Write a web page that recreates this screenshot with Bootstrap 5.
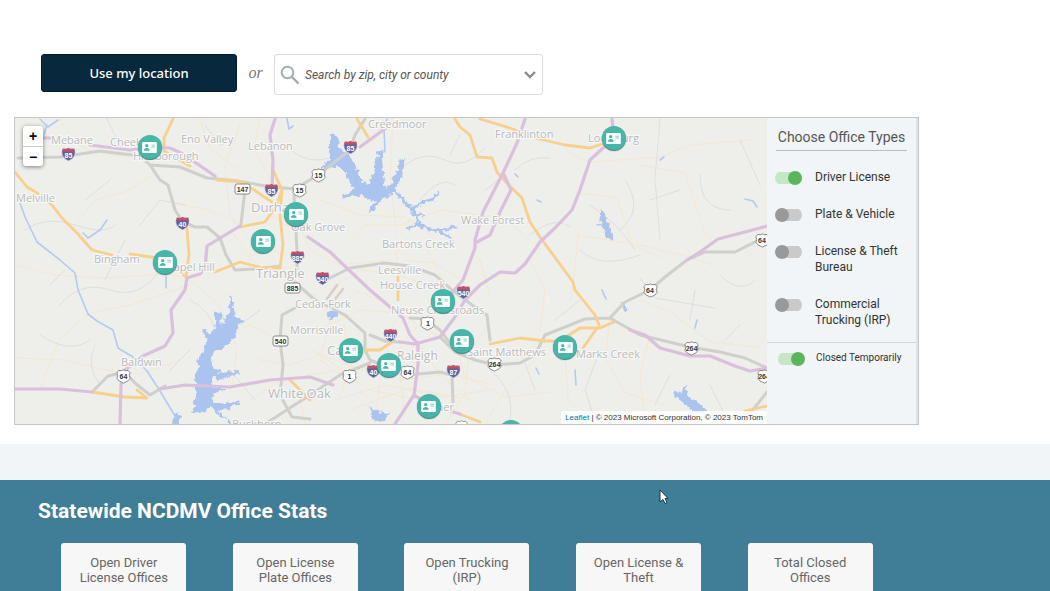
<!DOCTYPE html>
<html lang="en">
<head>
<meta charset="utf-8">
<meta name="viewport" content="width=device-width, initial-scale=1">
<title>NCDMV Office Locations</title>
<link href="https://cdn.jsdelivr.net/npm/bootstrap@5.3.0/dist/css/bootstrap.min.css" rel="stylesheet">
<style>
body{font-family:Roboto,"Liberation Sans",sans-serif;color:#444;background:#fff}
.finder{padding:54px 131px 19px 14px}
.finder-bar{padding-left:27px;margin-bottom:22px;gap:9px}
.btn-locate{width:196px;height:38px;background:#08283d;color:#fff;font:500 13px/18px "Noto Sans",sans-serif;border:1px solid #031a2b;border-radius:3px;padding:0}
.btn-locate:hover{background:#0f3b57;color:#fff}
.or-word{font:italic 16px/20px "Liberation Serif",serif;color:#777;width:19px;text-align:center;margin-top:9px}
.search-box{width:269px;height:41px;border:1px solid #dcdcdc;border-radius:3px;padding:0 6px 0 5px;gap:5px}
.search-box input{font-style:italic;font-size:12px;line-height:16px;color:#555;min-width:0}
.search-box input::placeholder{color:#555;opacity:1}
.office-map{border:1px solid #c4c6c6}
.map-view{height:306px;background:#eeeeeb;min-width:0}
.map-view>svg{width:100%;height:100%}
.pin{position:absolute;width:24px;height:24px;margin:-12px 0 0 -12px;border:0;border-radius:50%;padding:0;background:#48b5a9;box-shadow:0 1px 1px #397d76;display:flex;align-items:center;justify-content:center}
.zoom-ctl{position:absolute;left:8px;top:8px;width:20px;border-radius:3px;box-shadow:0 1px 4px #0007;background:#fff}
.zoom-ctl button{display:block;width:20px;height:20px;border:0;padding:0;background:none;color:#000;font:bold 14px/20px "Liberation Sans",sans-serif}
.zoom-ctl button+button{border-top:1px solid #ccc}
.credits{position:absolute;right:0;bottom:0;background:#fffc;padding:0 4px;font:8px/13px "Liberation Sans",sans-serif;color:#333;white-space:nowrap}
.credits a{color:#0078a8;text-decoration:none}
.type-panel{width:151px;background:#f1f5f7;border-right:2px solid #e1e4e6}
.type-panel h2{font-size:14px;line-height:20px;font-weight:400;color:#555;margin:9px 9px 18px;padding-bottom:3px;border-bottom:1px solid #bbbec0;text-align:center;white-space:nowrap}
.type-list{gap:21px;padding:0 8px 14px 8px}
.type-row{gap:13px}
.type-row label{font-size:12px;line-height:16px;color:#333}
.toggle{appearance:none;flex:none;width:27px;height:14px;margin:2px 0 0;position:relative;border-radius:7px;background:linear-gradient(#cacaca,#cacaca) 2px 1px/25px 12px no-repeat}
.toggle::before{content:"";position:absolute;left:0;top:0;width:14px;height:14px;border-radius:50%;background:#999}
.toggle:checked{background-image:linear-gradient(#c5e7c6,#c5e7c6);background-position:0 1px}
.toggle:checked::before{left:13px;background:#5ab55c}
.closed-row{border-top:1px solid #d3d8da;padding:7px 8px 0 11px}
.closed-row .type-row{gap:11px}
.closed-row label{font-size:10px}
.strip{height:36px;background:#f1f5f7}
.stats{background:#407d97;padding:19px 154px 60px 38px}
.stats h2{font-size:21px;line-height:24px;font-weight:700;color:#fff;margin:0 0 20px}
.stat-card{width:125px;height:110px;margin:0 auto;padding:12px 6px;background:#f7f7f7;border:0;border-radius:3px;color:#666;font-size:13px;line-height:15px;text-align:center}
.pointer{position:absolute;left:659px;top:9px}
</style>
<script src="https://cdn.jsdelivr.net/npm/bootstrap@5.3.0/dist/js/bootstrap.bundle.min.js"></script>
</head>
<body class="vh-100 overflow-hidden">
<svg width="0" height="0" class="position-absolute" aria-hidden="true">
<defs>
<filter id="shore" x="-20%" y="-20%" width="140%" height="140%"><feTurbulence type="fractalNoise" baseFrequency=".22" numOctaves="2" seed="4"/><feDisplacementMap in="SourceGraphic" scale="7" xChannelSelector="R" yChannelSelector="G"/></filter>
<symbol id="card" viewBox="0 0 16 12"><rect width="16" height="12" rx="1" fill="#fff"/><circle cx="5" cy="4" r="1.8" fill="#48b5a9"/><path d="M1.8 9.5c0-4 6.400-4 6.400 0z" fill="#48b5a9"/><path d="M10 3.500h4M10 5.500h4" stroke="#48b5a9" opacity=".7"/></symbol>
<symbol id="inter" viewBox="0 0 16 16" overflow="visible"><path d="M2 1.500q3 1 6-.5 3 1.500 6 .5 2 4 .8 7Q13.500 12.500 8 15 2.500 12.500 1.200 8.500 0 5 2 1.500z" fill="#5d649c" stroke="#e8e8f0" stroke-width=".7"/><path d="M2 1.500q3 1 6-.5 3 1.500 6 .5l1 3.200H1z" fill="#c94f62"/></symbol>
<symbol id="us" viewBox="0 0 16 16" overflow="visible"><path d="M3 1.500q2.500 1 5-.5 2.500 1.500 5 .5l2 2.500q-1.500 3 0 6-1 3-7 5-6-2-7-5 1.500-3 0-6z" fill="#fff" stroke="#777" stroke-width=".9"/></symbol>
</defs>
</svg>

<main>
<section class="finder">
  <div class="finder-bar d-flex align-items-start">
    <button class="btn btn-locate" type="button">Use my location</button>
    <span class="or-word">or</span>
    <div class="search-box d-flex align-items-center">
      <svg width="20" height="20" viewBox="0 0 20 20" fill="none" stroke="#a3abb0" stroke-width="2"><circle cx="7.500" cy="7.500" r="5.800"/><path d="M12 12l6.500 6.500" stroke-width="2.400"/></svg>
      <input class="border-0 p-0 flex-grow-1 bg-transparent" type="text" aria-label="Search offices" placeholder="Search by zip, city or county">
      <button class="btn p-0 border-0 d-flex" type="button" aria-label="Show suggestions"><svg width="12" height="10" viewBox="0 0 12 10" fill="none" stroke="#8c8c8c" stroke-width="2.400"><path d="M1 2l5 5 5-5"/></svg></button>
    </div>
  </div>

  <div class="office-map d-flex">
    <div class="map-view position-relative overflow-hidden flex-grow-1">
      <svg class="d-block" viewBox="15 118 752 306" preserveAspectRatio="xMidYMid slice" role="img" aria-label="Map of the Raleigh and Durham area">
        <g fill="none" stroke-linecap="round" stroke-linejoin="round">
          <!-- local roads -->
          <g stroke="#f4e8d0" stroke-width="1">
            <path d="M15 265l40 10 50 3 60-4 22 3M15 358l50 2 40 10 35 4 40-14M60 119l15 25 20 8 30 5M75 225l20-25 30-8 30-18M187 278l30 25 20 45-5 40M190 285l-60 20-40 8-30 25-20 50M200 119l10 30 25 18 20 20M240 125l-15 40 5 50 25 30M300 225l10 25 30 15 50-5M320 200l40 15 45 2 30 20M393 119l-3 60 5 40 3 60M400 225l40-15 40 5M470 219l30-5 40 35M540 119l30 35 20 8 70-5 30-12 60-5M577 193l40 5 15 45 50 12 30 10M577 235l50 8 35 15M579 230l-8 70M530 260l15 30-5 40M640 300l30 12 40 30 50 5M640 165l45 8 20 60 15 20M610 318l-5 40 20 35 40 12M650 335l-10 40 5 45M545 350l-40 40-20 34M565 350l3 50 20 24M290 290l25 5 15 25-10 40 20 15M240 340l20 20 30 5 30-10 30 20M250 400l30-20 60-10 30 20 50 10M335 400l50-15 60 12 50-8M300 400l5 24M395 320l-10 25 15 30 5 40M360 390l20 20 15 14M425 330l30 12 10 35 40 20 45-5M420 345l20 30 30 25M230 230l20 25 25-5 20 10M240 250l30 25 30-12M255 205l30 20 30 3M180 205l30 5 30 15"/>
            <path d="M320 330l40-20 40 3 35 22M310 350l50 20 60-8M340 395l12-30-8-40M375 424l5-45 25-40 25-25M400 380l50-6 40 10M445 424l20-30 4-40 20-30M350 410l60-22 50 10M405 260l30 3 30 20M425 245l20 40-5 30M460 240l20 20 10 35M330 290l30-20 40 5 50 20M355 290l35 15 45 10M280 340l-30-15-25 10M260 119l-6 30 16 30M345 245l20-20 50 0"/>
          </g>
          <g stroke="#dedfdf" stroke-width="1">
            <path d="M25 230q20-15 50-5t40 0M60 305q20-25 50-15t50-20M40 335q30 20 50 5M95 345q-10 20 5 40M190 300q20 10 25 30M140 225l20-25 25 5M205 125l15 20 15-5M290 150q20 15 40 8M405 165q20-15 40-5t40-12M420 200q20-25 35-15M515 170q15-15 35-12M530 235q25-20 40-8M590 205q30 20 45 45M625 180q20 30-5 50M660 119l-5 60 5 60M700 175q0 35 30 35M740 140l20 45M580 250q20 20 60 5M640 278l15 20 60 10M720 275q20 20 35 5M490 370q25 20 20 50M520 350l15 40M600 350l-15 40 10 30M670 375l-15 30M710 385l15 30M580 300l-25 20M695 290l-5 30"/>
            <path d="M65 270l-15 15M125 240l-20 40M105 115l15 30M110 180l-25 20M190 350l-20 20M230 370l25 30M260 310l-20 15M650 200l30-10M740 325l-15 15M485 190q20-12 25-30M460 135l-10 20"/>
          </g>
          <!-- rivers -->
          <g stroke="#b5caef" stroke-width="1.600">
            <path d="M20 203l5 14 12 25 23 18 15 13 3 17 10 24 9 7 16 9 5 18 15 9 14 14 13 20 15 25 1 12M40 119l8 8 10-7M47 125l-3 10M83 233l5 5 12-8 7-10M387 119l-3 10 1 23M545 137l8-5M602 290l4 9M660 160l4-3M745 199l8 2 4 6M605 224l-8 1M697 320l-2 8M166 276v12M287 119l2 10 4-3M575 370l1 15M536 368l3 6M515 174l3 3M537 200l4 2"/>
          </g>
          <!-- lakes -->
          <g filter="url(#shore)">
          <g fill="#aac4ef" stroke="#aac4ef" stroke-width="1">
            <path d="M231 297l2 12 3 8 7 3-5 6-3 10-9 10-9 5-6 4 2 14 8 2-10 4 0 12 15 2-13 4-2 12-6 6-12 1 4-20-2-14 5-9-3-7 8-12 2-11-5-10 8 5 4-3 2-9-1-10 6 1 0 14 7-11z"/>
            <path d="M213 375l26-3-22 8M210 404l28-1-22 9M216 412l14 10" stroke-width="2"/>
            <path d="M331 135l6 2 1 10 12 9 6 11 5 15 8 2 6-14 3-19 5-1-1 18 3 20 -4 12-12 0-7-5-20 2 12-8-8-16-7-7-18 2 9-8z"/>
            <path d="M384 190l6-4 6-13 6-16 2 2-2 17-7 10 2 6-14 6-14 17 2-6z"/>
            <path d="M602 210l10 23 1 7-5-1-7-17z"/>
            <path d="M687 385l-1 10 12 8 11 9-15 0-10-9-9-7-1-5 7 2zM329 311l10 2-7 6-5-3zM176 413l5 4-3 7h-5zM370 408l10 5 10 2-8 6-10-3z"/>
          </g>
          <path d="M393 191l8 5 5 9 9 3 8-6 10-3 5-6M411 205l5 10 8 1M409 205l8 14 6 8 15 4 17-4M420 223l-12 6M438 229l12 9 4 4M623 302l3 8" stroke="#aac4ef" stroke-width="2.600"/>
          </g>
          <!-- grey highways -->
          <g stroke="#cfcfcd" stroke-width="3">
            <path d="M18 158l42-1 40-6 40 5 10 9 30 2 27 11 31 3 27 5 29 3M150 165l10 15 8 5 7 25 8 12 12 5 12 0 13 11 6 17 9 15 20-1 25-3M245 190l-4 34M365 119l-10 16-5 15-32 25-20 12-4 8 3 55 0 20-7 8 25 22"/>
            <path d="M330 278l20-10 35-5 25 3 25 9 17 15 20 15 15 10 3 25M295 308l-13 7-2 25 3 25-3 30 12 22 18 2M265 424l45-29 30-20 30-12M315 300l30 15 20 18v17l5 10 20 8M370 335l15 6 15 1M418 374l22-2 12 3 1 27M410 318l15 1 15 11 15 20M92 392l16-16 17-4 10 11 15 12 15-9"/>
            <path d="M767 236l-32 16h-30l-18 8-22 17-15 13-25 12-15 16-25 1-40 16-10 20-15 8-25 2-20-5-20-8-15-15M610 318l30 17 50 12 30 5 25 6 22 10M752 411l15-19"/>
          </g>
          <!-- regional routes -->
          <g stroke="#f7d08c" stroke-width="2.800">
            <path d="M15 172l12 15 10 6 15 12 10 13 16 16 14 16 20 5M130 254l35 5 21 18M187 228l2 27-3 22M173 119l-9 19 0 13 26 15M215 272l25-10 22 6 18 0M240 227l25-5 10-14 7-18M272 168l10 22-2 25 3 30-3 23M217 180l25 2 30 20M357 119l11 18M92 392l33 5 22 1-10-8"/>
            <path d="M455 119l5 8 10 8 7 22 15 1 5 14 5 6 20 20 8 24 10 15 33 45 2 8 20 25 4 10M480 119l30 9 25 10 30 7 25 3 24-8M490 344l30-6 25 3 15 0 20-13h20l14-6M597 328l-14 20M745 411l22-5M398 277v23M365 350h15l12-8M290 380l20 20M460 414l20 8"/>
          </g>
          <!-- main highways -->
          <g stroke="#d9c0dc" stroke-width="3.200">
            <path d="M43 138h7M90 145l40 5 20-3 20 1 13 6 32 22M275 119l-5 16 3 25-1 28M390 125l-30 22M240 226l-33 20-2 22-5 6-13 4-2 12-14 20 2 23-8 13-22 10-18 14-4 15-1 39M15 389l45 0 32 3M160 389l25-4 45 2 40-7 40-3 23 8M308 237l22 15 40 38 33 28 7 17 8 9 0 21-4 30-19 29M400 342l15 2 25-7 15-20 10-17 15-15 20-13 15 1 10-9 15-22 15-14 17-18 8-20 10-30 24-22-2-19M525 119l-8 24-14 30-20 39-8 28v8l-12 32-13 15M504 175l7 15-11 22-10 23-13 7M414 395l16 10 30 9"/>
            <path d="M767 226l-22 6-27 7-18 13-13 8M630 330l15 5 15 13 30 8h20l25 10 15 5 17-3"/>
          </g>
          <path d="M327 299l10-14M332 303l11-14" stroke="#d9cfc9" stroke-width="2.500"/>
        </g>
        <!-- place names -->
        <g font-family="Open Sans, Noto Sans, sans-serif" font-size="11" fill="#b9babd" stroke="#f7f7f5" stroke-width="2.500" paint-order="stroke" stroke-linejoin="round">
          <text x="51" y="144">Mebane</text><text x="110" y="146">Cheeks</text><text x="133" y="160">Hillsborough</text><text x="181" y="143">Eno Valley</text><text x="248" y="150">Lebanon</text><text x="368" y="128">Creedmoor</text><text x="495" y="138">Franklinton</text><text x="588" y="142">Louisburg</text><text x="16" y="202">Melville</text><text x="94" y="263">Bingham</text><text x="160" y="271">Chapel Hill</text><text x="291" y="231">Oak Grove</text><text x="461" y="224">Wake Forest</text><text x="382" y="248">Bartons Creek</text><text x="378" y="274">Leesville</text><text x="380" y="289">House Creek</text><text x="391" y="314">Neuse Crossroads</text><text x="295" y="308">Cedar Fork</text><text x="290" y="334">Morrisville</text><text x="467" y="356">Saint Matthews</text><text x="576" y="358">Marks Creek</text><text x="121" y="366">Baldwin</text><text x="232" y="428">Buckhorn</text><text x="418" y="411">Garner</text>
          <g font-size="12"><text x="251" y="212" font-size="13">Durham</text><text x="256" y="278" font-size="13">Triangle</text><text x="327" y="355" font-size="13">Cary</text><text x="397" y="360">Raleigh</text><text x="268" y="398" font-size="13">White Oak</text></g>
        </g>
        <!-- route shields -->
        <g font-family="Liberation Sans, sans-serif" font-size="7" font-weight="bold" text-anchor="middle">
          <g fill="#fff">
            <use href="#inter" x="61" y="147" width="15" height="15"/><text x="68.500" y="158">85</text>
            <use href="#inter" x="264" y="183" width="15" height="15"/><text x="271.500" y="194">85</text>
            <use href="#inter" x="343" y="140" width="15" height="15"/><text x="350.500" y="151">85</text>
            <use href="#inter" x="175" y="216" width="15" height="15"/><text x="182.500" y="227">40</text>
            <use href="#inter" x="290" y="250" width="15" height="15"/><text x="297.500" y="261">885</text>
            <use href="#inter" x="315" y="271" width="15" height="15"/><text x="322.500" y="282">540</text>
            <use href="#inter" x="456" y="285" width="15" height="15"/><text x="463.500" y="296">540</text>
            <use href="#inter" x="383" y="328" width="15" height="15"/><text x="390.500" y="339">440</text>
            <use href="#inter" x="366" y="364" width="15" height="15"/><text x="373.500" y="375">40</text>
            <use href="#inter" x="446" y="364" width="15" height="15"/><text x="453.500" y="375">87</text>
          </g>
          <g fill="#333">
            <use href="#us" x="311" y="168" width="15" height="15"/><text x="318.500" y="178">15</text>
            <use href="#us" x="292" y="183" width="15" height="15"/><text x="299.500" y="193">15</text>
            <use href="#us" x="420" y="316" width="15" height="15"/><text x="428" y="326">1</text>
            <use href="#us" x="342" y="369" width="15" height="15"/><text x="349.500" y="379">1</text>
            <use href="#us" x="400" y="365" width="15" height="15"/><text x="407.500" y="375">64</text>
            <use href="#us" x="116" y="369" width="15" height="15"/><text x="123.500" y="379">64</text>
            <use href="#us" x="643" y="283" width="15" height="15"/><text x="650" y="293">64</text>
            <use href="#us" x="755" y="233" width="15" height="15"/><text x="762" y="243">64</text>
            <use href="#us" x="487" y="357" width="15" height="15"/><text x="494.500" y="367">264</text>
            <use href="#us" x="684" y="341" width="15" height="15"/><text x="691.500" y="351">264</text>
            <use href="#us" x="757" y="369" width="15" height="15"/><text x="764" y="379">264</text>
            <use href="#us" x="455" y="420" width="13" height="13"/>
            <g fill="#fff" stroke="#888"><rect x="235" y="184" width="15" height="10" rx="2"/><rect x="285" y="283" width="15" height="10" rx="2"/><rect x="273" y="336" width="15" height="10" rx="2"/></g>
            <text x="242.500" y="192">147</text><text x="292.500" y="291">885</text><text x="280.500" y="344">540</text>
          </g>
        </g>
      </svg>
      <button class="pin" type="button" aria-label="Hillsborough office" style="left:17.950%;top:29px"><svg width="15" height="11"><use href="#card"/></svg></button>
      <button class="pin" type="button" aria-label="Durham East office" style="left:37.370%;top:96px"><svg width="15" height="11"><use href="#card"/></svg></button>
      <button class="pin" type="button" aria-label="Durham South office" style="left:32.980%;top:123px"><svg width="15" height="11"><use href="#card"/></svg></button>
      <button class="pin" type="button" aria-label="Carrboro office" style="left:19.950%;top:144px"><svg width="15" height="11"><use href="#card"/></svg></button>
      <button class="pin" type="button" aria-label="Louisburg office" style="left:79.650%;top:20px"><svg width="15" height="11"><use href="#card"/></svg></button>
      <button class="pin" type="button" aria-label="Raleigh North office" style="left:56.910%;top:183px"><svg width="15" height="11"><use href="#card"/></svg></button>
      <button class="pin" type="button" aria-label="Raleigh East office" style="left:59.440%;top:223px"><svg width="15" height="11"><use href="#card"/></svg></button>
      <button class="pin" type="button" aria-label="Cary office" style="left:44.680%;top:232px"><svg width="15" height="11"><use href="#card"/></svg></button>
      <button class="pin" type="button" aria-label="Raleigh West office" style="left:49.730%;top:247px"><svg width="15" height="11"><use href="#card"/></svg></button>
      <button class="pin" type="button" aria-label="Wendell office" style="left:73.140%;top:229px"><svg width="15" height="11"><use href="#card"/></svg></button>
      <button class="pin" type="button" aria-label="Garner office" style="left:55.050%;top:288px"><svg width="15" height="11"><use href="#card"/></svg></button>
      <button class="pin" type="button" aria-label="Clayton office" style="left:65.960%;top:314px"><svg width="15" height="11"><use href="#card"/></svg></button>
      <div class="zoom-ctl"><button type="button" aria-label="Zoom in">+</button><button type="button" aria-label="Zoom out">−</button></div>
      <div class="credits"><a href="#">Leaflet</a> | © 2023 Microsoft Corporation, © 2023 TomTom</div>
    </div>

    <aside class="type-panel flex-shrink-0">
      <h2>Choose Office Types</h2>
      <div class="type-list d-flex flex-column">
        <div class="type-row d-flex align-items-start"><input class="toggle" type="checkbox" role="switch" id="driver" checked><label for="driver">Driver License</label></div>
        <div class="type-row d-flex align-items-start"><input class="toggle" type="checkbox" role="switch" id="plate"><label for="plate">Plate &amp; Vehicle</label></div>
        <div class="type-row d-flex align-items-start"><input class="toggle" type="checkbox" role="switch" id="theft"><label for="theft">License &amp; Theft<br>Bureau</label></div>
        <div class="type-row d-flex align-items-start"><input class="toggle" type="checkbox" role="switch" id="irp"><label for="irp">Commercial<br>Trucking (IRP)</label></div>
      </div>
      <div class="closed-row"><div class="type-row d-flex align-items-start"><input class="toggle" type="checkbox" role="switch" id="closed" checked><label class="text-nowrap" for="closed">Closed Temporarily</label></div></div>
    </aside>
  </div>
</section>

<div class="strip"></div>

<section class="stats position-relative">
  <h2>Statewide NCDMV Office Stats</h2>
  <div class="row row-cols-5 g-0">
    <div class="col"><div class="card stat-card">Open Driver<br>License Offices</div></div>
    <div class="col"><div class="card stat-card">Open License<br>Plate Offices</div></div>
    <div class="col"><div class="card stat-card">Open Trucking<br>(IRP)</div></div>
    <div class="col"><div class="card stat-card">Open License &amp;<br>Theft</div></div>
    <div class="col"><div class="card stat-card">Total Closed<br>Offices</div></div>
  </div>
  <svg class="pointer" width="10" height="16" viewBox="0 0 10 16" aria-hidden="true"><path d="M1 1v12l3-2.500 2 4 2-1-2-4h3z" fill="#fff" stroke="#173b50"/></svg>
</section>
</main>
</body>
</html>
